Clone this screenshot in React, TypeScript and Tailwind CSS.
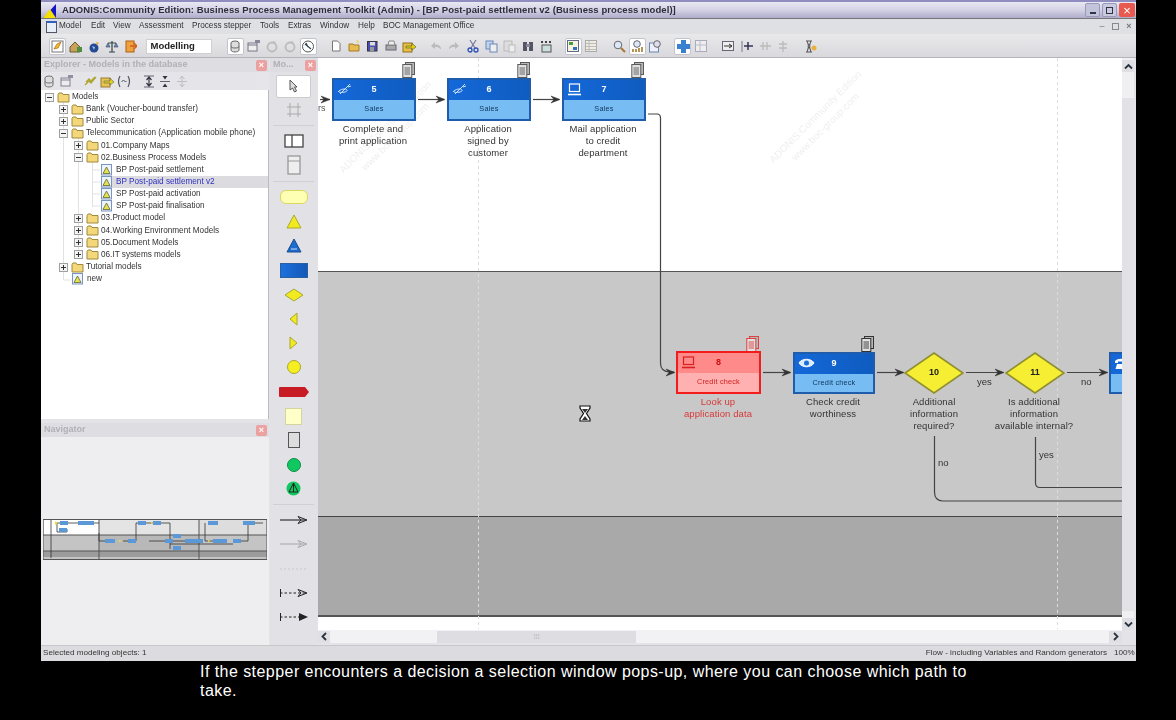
import React from "react";

const F = "font-['Liberation_Sans',Arial,sans-serif]";

function Ic({ n }: { n: string }) {
  const p: Record<string, React.ReactNode> = {
    note: <><rect x="2" y="2" width="11" height="11" fill="#fff" stroke="#777" /><path d="M4 10l3-5 4-2-3 6z" fill="#f0c020" stroke="#b06010" strokeWidth=".7" /></>,
    house: <><path d="M2 8l5-5 5 5v5H2z" fill="#caa05a" stroke="#6a5a30" /><rect x="9" y="8" width="5" height="5" fill="#4d8f3c" /></>,
    globe: <><circle cx="7" cy="9" r="4.5" fill="#234a90" /><path d="M5 7l3 1-1 3z" fill="#9cc0f0" /><path d="M9 3l3 1-2 2z" fill="#e0a030" /></>,
    scale: <><path d="M7 2v11M3 4h8M4 13h6" stroke="#344" strokeWidth="1.2" fill="none" /><path d="M1 8l2-4 2 4zM9 8l2-4 2 4z" fill="#6a8ac0" stroke="#345" strokeWidth=".6" /></>,
    door: <><rect x="3" y="2" width="8" height="11" fill="#f0a040" stroke="#b06010" /><path d="M7 7h7M11 4l3 3-3 3" stroke="#d06010" fill="none" strokeWidth="1.3" /></>,
    db: <><ellipse cx="7" cy="4" rx="4" ry="2" fill="#ddd" stroke="#666" /><path d="M3 4v7c0 2.6 8 2.6 8 0V4" fill="#ddd" stroke="#666" /><path d="M3 7.500c0 2 8 2 8 0" fill="none" stroke="#666" /></>,
    win: <><rect x="2" y="4" width="9" height="8" fill="#eee" stroke="#778" /><path d="M2 6h9" stroke="#778" /><path d="M9 1h5v3H9z" fill="#889" /></>,
    dim: <><circle cx="7" cy="8" r="4.500" fill="none" stroke="#bbb" strokeWidth="1.800" /><path d="M8 2l3 1-2 2z" fill="#bbb" /></>,
    comp: <><circle cx="7" cy="7.500" r="5.500" fill="#fff" stroke="#555" /><path d="M4 5l6 5M5 4l2 4" stroke="#345" strokeWidth="1.200" /></>,
    doc: <path d="M3.500 2h5l2.500 2.500V12h-7.500z" fill="#fff" stroke="#777" />,
    open: <><path d="M2 5h4l1 1h5v6H2z" fill="#e6bc50" stroke="#a87c20" /><path d="M9 1l3 1-1 3z" fill="#f0d060" /></>,
    save: <><rect x="2.500" y="2.500" width="9.500" height="9.500" fill="#4a4fb0" stroke="#334" /><rect x="5" y="3" width="5" height="3.500" fill="#ddd" /><rect x="5" y="8" width="4" height="4" fill="#999" /></>,
    print: <><rect x="2" y="6" width="10" height="5" fill="#aaa" stroke="#667" /><path d="M4 6l1-4h5l1 4z" fill="#eee" stroke="#888" /></>,
    exp: <><rect x="1" y="4" width="9" height="9" fill="#e8c040" stroke="#907020" /><path d="M4 7h6V4l4 4-4 3V9H4z" fill="#e0d000" stroke="#555" strokeWidth=".6" /></>,
    undo: <path d="M2 7l4-4v2.500c4 0 6 1.500 6 5-1.500-2-3-2.500-6-2.500V10z" fill="#bbb" />,
    redo: <path d="M12 7L8 3v2.500c-4 0-6 1.500-6 5 1.500-2 3-2.500 6-2.500V10z" fill="#bbb" />,
    cut: <><path d="M4 1l5 8M10 1L5 9" stroke="#779" strokeWidth="1.200" /><circle cx="4" cy="11" r="2" fill="none" stroke="#2a4fb8" strokeWidth="1.300" /><circle cx="10" cy="11" r="2" fill="none" stroke="#2a4fb8" strokeWidth="1.300" /></>,
    copy: <><rect x="2" y="2" width="7" height="8" fill="#c0d4f0" stroke="#6a88b8" /><rect x="6" y="5" width="7" height="8" fill="#eee" stroke="#6a88b8" /></>,
    paste: <><rect x="2" y="2" width="8" height="10" fill="#ddd" stroke="#bbb" /><rect x="7" y="6" width="6" height="7" fill="#eee" stroke="#bbb" /></>,
    find: <><rect x="2" y="3" width="4" height="9" fill="#556" /><rect x="8" y="3" width="4" height="9" fill="#556" /><rect x="5" y="5" width="4" height="3" fill="#889" /></>,
    repl: <><path d="M2 3h2M6 3h2M10 3h2" stroke="#444" strokeWidth="2" /><rect x="3" y="6" width="9" height="7" fill="#cdd" stroke="#555" /></>,
    model: <><rect x="1.500" y="1.500" width="11" height="11" fill="#f4f4e0" stroke="#668" /><path d="M3 3h4v3H3z" fill="#4a9a40" /><path d="M7 8h4v3H7z" fill="#3070c0" /></>,
    table: <><rect x="1.500" y="1.500" width="11" height="11" fill="#f0ece0" stroke="#aaa" /><path d="M1.500 4.500h11M1.500 7.500h11M1.500 10.500h11M5 1.500v11" stroke="#bbb" /></>,
    zoom: <><circle cx="6" cy="6" r="3.800" fill="#dde8f4" stroke="#667" /><path d="M9 9l4 4" stroke="#a87830" strokeWidth="2" /></>,
    zbar: <><circle cx="7" cy="5" r="3.300" fill="#dde8f4" stroke="#667" /><path d="M3 13v-3M6 13V10M9 13V9M12 13V8" stroke="#a07020" strokeWidth="1.500" /></>,
    zpg: <><rect x="1.500" y="4" width="9" height="9" fill="#eef" stroke="#68a" /><circle cx="9" cy="5" r="3.300" fill="#dde" stroke="#666" /></>,
    cross: <><rect x="1" y="5" width="13" height="5" fill="#3a80d0" /><rect x="5" y="1" width="5" height="13" fill="#3a80d0" /></>,
    grid: <><rect x="1.500" y="1.500" width="11" height="11" fill="#eee" stroke="#aab" /><path d="M1.500 6h11M6 1.500v11" stroke="#bbc" /></>,
    al1: <><rect x="1.500" y="2.500" width="11" height="9" fill="#eee" stroke="#667" /><path d="M3 7h8M8 5l3 2-3 2" stroke="#333" fill="none" /></>,
    al2: <><path d="M2 2v11" stroke="#778" /><path d="M4 7h9M8 3v8" stroke="#335" strokeWidth="1.500" /></>,
    al3: <><path d="M2 7h11M5 3v8M9 3v8" stroke="#bbb" strokeWidth="1.300" /></>,
    al4: <><path d="M7 2v11M3 5h8M3 9h8" stroke="#bbb" strokeWidth="1.300" /></>,
    hour: <><path d="M3 2h6M3 13h6M4 2l2 5-2 6M8 2L6 7l2 6" stroke="#555" fill="#bbb" /><circle cx="11" cy="9" r="2.500" fill="#e8b040" /></>,
    chart: <path d="M1 11l4-4 2 2 5-6M2 8l3-3 2 2 4-4" fill="none" stroke="#a8a020" strokeWidth="1.300" />,
    paren: <><path d="M3 2Q0 7.500 3 13M11 2Q14 7.500 11 13" fill="none" stroke="#445" strokeWidth="1.200" /><path d="M4.500 8l2-2 2 2 1-1" fill="none" stroke="#445" /></>,
    ex1: <><path d="M2 2h10M2 13h10" stroke="#556" /><path d="M7 3v9M4.500 6L7 3l2.500 3M4.500 9L7 12l2.500-3" fill="none" stroke="#223" strokeWidth="1.200" /></>,
    ex2: <><path d="M2 7.500h10" stroke="#556" /><path d="M4.500 2L7 5.500 9.500 2zM4.500 13L7 9.500 9.500 13z" fill="#223" /></>,
    ex3: <><path d="M2 7.500h10M7 2v11M4.500 5L7 2l2.500 3M4.500 10L7 13l2.500-3" fill="none" stroke="#bbb" /></>,
  };
  return <svg width="14" height="15" viewBox="0 0 14 15">{p[n]}</svg>;
}

const groups: { n: string; on?: boolean }[][] = [
  [{ n: "db", on: true }, { n: "win" }, { n: "dim" }, { n: "dim" }, { n: "comp", on: true }],
  [{ n: "doc" }, { n: "open" }, { n: "save" }, { n: "print" }, { n: "exp" }],
  [{ n: "undo" }, { n: "redo" }, { n: "cut" }, { n: "copy" }, { n: "paste" }, { n: "find" }, { n: "repl" }],
  [{ n: "model", on: true }, { n: "table" }],
  [{ n: "zoom" }, { n: "zbar", on: true }, { n: "zpg" }],
  [{ n: "cross", on: true }, { n: "grid" }],
  [{ n: "al1" }, { n: "al2" }, { n: "al3" }, { n: "al4" }],
  [{ n: "hour" }],
];

function Btn({ n, on, small }: { n: string; on?: boolean; small?: boolean }) {
  return (
    <div className={`${small ? "w-[16.7px]" : "w-[18.3px]"} h-[18px] flex items-center justify-center`}>
      <div className={on ? "w-[17px] h-[17px] shrink-0 flex items-center justify-center bg-white border border-[#c4c4cc] rounded-[2px]" : "w-[17px] h-[17px] shrink-0 flex items-center justify-center"}>
        <Ic n={n} />
      </div>
    </div>
  );
}

const menu: [string, string][] = [
  ["Model", "w-[32px]"], ["Edit", "w-[22px]"], ["View", "w-[26px]"], ["Assessment", "w-[53px]"], ["Process stepper", "w-[68px]"],
  ["Tools", "w-[28px]"], ["Extras", "w-[32px]"], ["Window", "w-[38px]"], ["Help", "w-[25px]"], ["BOC Management Office", "w-[100px]"],
];

type Row = { t: string; d: number; k: "open" | "closed" | "doc" | "none"; sel?: boolean };
const rows: Row[] = [
  { t: "Models", d: 0, k: "open" },
  { t: "Bank (Voucher-bound transfer)", d: 1, k: "closed" },
  { t: "Public Sector", d: 1, k: "closed" },
  { t: "Telecommunication (Application mobile phone)", d: 1, k: "open" },
  { t: "01.Company Maps", d: 2, k: "closed" },
  { t: "02.Business Process Models", d: 2, k: "open" },
  { t: "BP Post-paid settlement", d: 3, k: "doc" },
  { t: "BP Post-paid settlement v2", d: 3, k: "doc", sel: true },
  { t: "SP Post-paid activation", d: 3, k: "doc" },
  { t: "SP Post-paid finalisation", d: 3, k: "doc" },
  { t: "03.Product model", d: 2, k: "closed" },
  { t: "04.Working Environment Models", d: 2, k: "closed" },
  { t: "05.Document Models", d: 2, k: "closed" },
  { t: "06.IT systems models", d: 2, k: "closed" },
  { t: "Tutorial models", d: 1, k: "closed" },
  { t: "new", d: 1, k: "none" },
];
const indent: Record<number, string> = { 0: "pl-[4px]", 1: "pl-[18px]", 2: "pl-[33px]", 3: "pl-[60px]" };

function Folder() {
  return (
    <svg width="13" height="11" viewBox="0 0 13 11" className="shrink-0">
      <path d="M1 2.500l1-1.500h3l1 1.500h6v7.500H1z" fill="#f3d77a" stroke="#a08a3c" />
    </svg>
  );
}
function ModelDoc() {
  return (
    <svg width="12" height="12" viewBox="0 0 12 12" className="shrink-0">
      <rect x=".5" y=".5" width="10" height="10.500" fill="#eef4ff" stroke="#7a94c0" />
      <path d="M2 9.500L5.500 3 9 9.500z" fill="#e8e050" stroke="#5a6a30" strokeWidth=".8" />
    </svg>
  );
}
function TreeRow({ r }: { r: Row }) {
  const box = r.k === "open" || r.k === "closed";
  return (
    <div className={`relative h-[12.15px] flex items-center ${indent[r.d]}`}>
      {box && (
        <span className="w-[9px] h-[9px] mr-[3px] border border-[#a0a0a0] bg-[#f4f4f4] relative shrink-0 flex items-center justify-center">
          <span className="w-[5px] h-px bg-[#333]" />
          {r.k === "closed" && <span className="absolute left-[3px] top-[1px] w-px h-[5px] bg-[#333]" />}
        </span>
      )}
      {r.k === "none" && <span className="w-[13px] shrink-0 bg-white" />}
      <div className={`flex-1 h-full flex items-center ${r.sel ? "bg-[#dcdce0]" : ""}`}>
        {box ? <Folder /> : <ModelDoc />}
        <span className={`${box ? "ml-[2px]" : "ml-[3px]"} text-[8.200px] leading-none whitespace-nowrap ${r.sel ? "text-[#3030c0]" : "text-[#333]"}`}>{r.t}</span>
      </div>
    </div>
  );
}

function PanelTitle({ t, w }: { t: string; w: string }) {
  return (
    <div className={`h-[14px] shrink-0 flex items-center justify-between bg-[#dedee2] pl-[3px] pr-[2px] ${w}`}>
      <span className="text-[9px] font-bold text-[#b0b0b6] whitespace-nowrap">{t}</span>
      <span className="w-[11px] h-[11px] rounded-[2px] bg-[#eda0a0] flex items-center justify-center text-white text-[9px] leading-none font-bold">×</span>
    </div>
  );
}

function Pal({ children, sel }: { children: React.ReactNode; sel?: boolean }) {
  return (
    <div className="flex items-center justify-center h-[24.3px]">
      <div className={sel ? "w-[35px] h-[23px] bg-white border border-[#ccc] rounded-[2px] flex items-center justify-center" : "flex items-center justify-center"}>
        {children}
      </div>
    </div>
  );
}

function Arrow({ c = "#222", dash, head = "open", tail }: { c?: string; dash?: boolean; head?: "open" | "fill"; tail?: boolean }) {
  return (
    <svg width="30" height="12" viewBox="0 0 30 12">
      <path d="M1 6h25" stroke={c} strokeWidth="1.100" strokeDasharray={dash ? "2.500 2" : undefined} />
      {tail && <path d="M1.500 2v8" stroke={c} />}
      {head === "open" ? <path d="M19 2.500L28 6l-9 3.500 3-3.500z" fill="none" stroke={c} /> : <path d="M20 2l9 4-9 4z" fill={c} />}
    </svg>
  );
}

function Sep({ h }: { h: string }) {
  return (
    <div className={`${h} flex items-center mx-[3px]`}>
      <div className="h-px flex-1 bg-[#cfcfd4]" />
    </div>
  );
}

function Stack({ c = "#5a5a5a" }: { c?: string }) {
  return (
    <svg width="13" height="16" viewBox="0 0 13 16">
      <rect x="3.500" y=".5" width="9" height="12" fill="#b8b8b8" stroke={c} />
      <rect x=".8" y="2.500" width="9" height="13" fill="#e0e0e0" stroke={c} />
      <path d="M2.500 6h5.500M2.500 8h5.500M2.500 10h5.500M2.500 12h5.500" stroke={c} strokeWidth=".9" />
    </svg>
  );
}

function Mon({ c = "#fff" }: { c?: string }) {
  return (
    <svg width="15" height="13" viewBox="0 0 15 13">
      <rect x="2.500" y="1" width="10" height="7.500" fill="none" stroke={c} strokeWidth="1.200" />
      <path d="M1 11.500h13" stroke={c} strokeWidth="1.600" />
    </svg>
  );
}
function Sign() {
  return (
    <svg width="15" height="13" viewBox="0 0 15 13">
      <path d="M1 9c2-3 8-4 9-2s-5 3-8 2M3 11L13 1M11 4l3-1" fill="none" stroke="#cde4ff" strokeWidth="1" />
    </svg>
  );
}
function Eye() {
  return (
    <svg width="17" height="12" viewBox="0 0 17 12">
      <path d="M1 6c3-5 12-5 15 0-3 5-12 5-15 0z" fill="#d8ecff" stroke="#fff" />
      <circle cx="8.500" cy="6" r="2.500" fill="#1b6fd8" />
    </svg>
  );
}
function Phone() {
  return (
    <svg width="13" height="13" viewBox="0 0 13 13">
      <path d="M1 4c3-3 8-3 11 0v2H9V4.500H4V6H1zM3 7h7l1.500 5h-10z" fill="#fff" />
    </svg>
  );
}

function Box({ pos, num, lane, icon, red }: { pos: string; num?: string; lane?: string; icon: React.ReactNode; red?: boolean }) {
  return (
    <div className={`absolute ${pos} flex flex-col border-2 ${red ? "border-[#f21c1c] bg-[#ffb0b0]" : "border-[#1f5cab]"}`}>
      <div className={`relative h-[20px] flex items-center justify-center ${red ? "bg-[#ff8a8a]" : "bg-gradient-to-r from-[#1468d8] to-[#0f5cc0]"}`}>
        <span className="absolute left-[3px] top-[3px] flex">{icon}</span>
        {num && <span className={`text-[9px] font-bold ${red ? "text-[#d01010]" : "text-white"}`}>{num}</span>}
      </div>
      <div className={`flex-1 flex items-center justify-center text-[7.300px] tracking-[0.2px] ${red ? "bg-[#ffb0b0] text-[#d02020]" : "bg-[#78bcf4] text-[#123a60]"}`}>{lane}</div>
    </div>
  );
}

function Label({ pos, lines, c = "text-[#333]" }: { pos: string; lines: string[]; c?: string }) {
  return (
    <div className={`absolute ${pos} w-[110px] text-center text-[9.500px] leading-[11.800px] tracking-[0.1px] ${c}`}>
      {lines.map((l) => <div key={l} className="whitespace-nowrap">{l}</div>)}
    </div>
  );
}

function Watermark({ pos }: { pos: string }) {
  return (
    <div className={`absolute ${pos} -rotate-45 text-[#efefef] text-[10px] leading-[14px] text-center whitespace-nowrap`}>
      <div>ADONIS:Community Edition</div>
      <div>www.boc-group.com</div>
    </div>
  );
}

function Connectors() {
  const arrows = [
    "M2 41.500H12", "M100 41.500H126", "M215 41.500H241", "M330 56H339Q342.500 56 342.500 60V305Q342.500 314 352 314H356",
    "M445 314.500H472", "M559 314.500H585", "M648 314.500H685", "M749 314.500H789",
    "M616.500 378V434Q616.500 443 625 443H804", "M717.500 379V425Q717.500 429.500 722 429.500H804",
  ];
  const heads: [number, number][] = [[12, 41.500], [127, 41.500], [242, 41.500], [357, 314.500], [473, 314.500], [586, 314.500], [686, 314.500], [790, 314.500]];
  return (
    <svg className="absolute left-0 top-0" width="804" height="572" viewBox="0 0 804 572">
      <path d="M160.500 0V571M739.500 0V571" stroke="#dcdcdc" strokeDasharray="3 3" fill="none" />
      {arrows.map((d) => <path key={d} d={d} fill="none" stroke="#444" strokeWidth="1.200" />)}
      {heads.map(([x, y]) => <path key={x} d={`M${x - 9} ${y - 3.500}L${x} ${y}L${x - 9} ${y + 3.500}L${x - 6} ${y}z`} fill="#333" stroke="#333" strokeWidth=".5" />)}
    </svg>
  );
}

function Diamond({ pos, n }: { pos: string; n: string }) {
  return (
    <div className={`absolute ${pos} w-[60px] h-[42px] flex items-center justify-center`}>
      <svg className="absolute inset-0" width="60" height="42" viewBox="0 0 60 42">
        <path d="M30 1L59 21 30 41 1 21z" fill="#f5ee32" stroke="#8f8f30" strokeWidth="1.600" />
      </svg>
      <span className="relative text-[9px] font-bold text-[#222]">{n}</span>
    </div>
  );
}

function Thumb() {
  return (
    <svg width="224" height="41" viewBox="0 0 224 41" className="block">
      <rect width="224" height="41" fill="#c4c4c4" />
      <rect x="1" y="1" width="55" height="15" fill="#fff" />
      <rect x="56" y="1" width="100" height="15" fill="#e4e4e4" />
      <rect x="156" y="1" width="67" height="15" fill="#ddd" />
      <rect x="56" y="16" width="100" height="16" fill="#b8b8b8" />
      <rect y="32" width="224" height="6" fill="#9c9c9c" />
      <path d="M0 .5H224V40.500H0zM0 16H224M0 32H224M56 0V41M156 0V41" fill="none" stroke="#555" strokeWidth="1" />
      <path d="M8 1V39M14 4H56M14 4V13H24V10M56 14V22H70M80 22H93V4H110M110 4H127V30M106 22H145M127 25H190M162 4V22H175M192 22H205V4H220" fill="none" stroke="#333" strokeWidth=".8" />
      <path d="M17 2h8v4h-8zM35 2h16v4H35zM16 9h8v4h-8zM95 2h8v4h-8zM110 2h8v4h-8zM62 20h10v4H62zM85 20h8v4h-8zM122 20h8v4h-8zM130 15h8v4h-8zM142 20h18v4H142zM165 2h10v4H165zM200 2h12v4H200zM170 20h14v4H170zM190 20h8v4h-8zM130 27h8v4h-8z" fill="#5a98d8" />
      <path d="M12 2l3 2-3 2zM108 3l3 1-3 1zM76 21l3 1-3 1zM165 21l3 1-3 1z" fill="#e8e040" />
    </svg>
  );
}

function Chev({ d }: { d: string }) {
  return (
    <svg width="9" height="9" viewBox="0 0 9 9">
      <path d={d} fill="none" stroke="#2b3340" strokeWidth="1.800" />
    </svg>
  );
}

export default function App() {
  return (
    <div className={`w-[1176px] h-[720px] bg-black overflow-hidden ${F}`}>
      <div className="ml-[41px] w-[1095px] h-[661px] bg-[#e4e4e8] flex flex-col blur-[0.3px]">
        {/* title bar */}
        <div className="h-[19px] shrink-0 flex items-center bg-gradient-to-b from-[#e8e8f2] via-[#d4d2e4] to-[#aeaccb] border-t-2 border-t-[#8f8cc0] border-b border-b-[#777]">
          <svg width="15" height="15" viewBox="0 0 15 15" className="ml-[1px] shrink-0">
            <path d="M1 15L14 1v14z" fill="#1414c8" /><path d="M1 15L8 6l6 9z" fill="#f2e000" />
          </svg>
          <span className="ml-[5px] text-[9.500px] font-bold text-[#2d2d3c] tracking-[0.07px] whitespace-nowrap">ADONIS:Community Edition: Business Process Management Toolkit (Admin) - [BP Post-paid settlement v2 (Business process model)]</span>
          <div className="ml-auto flex gap-[2px] pr-[1px]">
            <div className="w-[15px] h-[14px] rounded-[2px] bg-[#c2c4dc] border border-[#9a9ab8] flex items-end justify-center pb-[2px]"><span className="w-[6px] h-[2px] bg-[#334]" /></div>
            <div className="w-[15px] h-[14px] rounded-[2px] bg-[#c8cae0] border border-[#9a9ab8] flex items-center justify-center"><span className="w-[7px] h-[7px] border border-[#334]" /></div>
            <div className="w-[16px] h-[14px] rounded-[2px] bg-[#e85a50] flex items-center justify-center text-white text-[13px] leading-none">×</div>
          </div>
        </div>
        {/* menu */}
        <div className="h-[15px] shrink-0 flex items-center bg-[#dfe0e4]">
          <div className="w-[11px] h-[12px] ml-[5px] mr-[2px] bg-[#e8eef8] border border-[#556] border-t-2 border-t-[#3060c0] shrink-0" />
          {menu.map(([m, w]) => <span key={m} className={`text-[8.200px] text-[#333] whitespace-nowrap ${w}`}>{m}</span>)}
          <div className="ml-auto flex items-center gap-[6px] pr-[3px] text-[#777] text-[9px] leading-none">
            <span className="w-[8px] text-center">–</span>
            <span className="w-[7px] h-[7px] border border-[#888]" />
            <span className="w-[8px] text-center font-bold">×</span>
          </div>
        </div>
        {/* toolbar */}
        <div className="h-[24px] shrink-0 flex items-center bg-gradient-to-b from-[#e9e9ec] to-[#d9d9dd] border-b border-[#b4b4b8] pl-[7px] pt-[2px]">
          <Btn n="note" on /><Btn n="house" /><Btn n="globe" /><Btn n="scale" /><Btn n="door" />
          <div className="ml-[7px] w-[66px] h-[15px] bg-white border border-[#d0d0d4] flex items-center pl-[3px] text-[9.500px] font-bold text-[#222] shrink-0">Modelling</div>
          <div className="w-[13.500px] shrink-0" />
          {groups.map((g, i) => (
            <div key={i} className="flex mr-[9px]">
              {g.map((b, j) => <Btn key={j} n={b.n} on={b.on} />)}
            </div>
          ))}
        </div>
        {/* body */}
        <div className="flex-1 min-h-0 flex">
          {/* left panel */}
          <div className="w-[228px] shrink-0 flex flex-col bg-[#e4e4e8]">
            <PanelTitle t="Explorer - Models in the database" w="w-[228px]" />
            <div className="h-[18px] shrink-0 flex items-center bg-[#e6e6ea] opacity-90">
              <Btn small n="db" /><Btn small n="win" /><div className="w-[8px]" />
              <Btn small n="chart" /><Btn small n="exp" /><Btn small n="paren" /><div className="w-[8px]" />
              <Btn small n="ex1" /><Btn small n="ex2" /><Btn small n="ex3" />
            </div>
            <div className="relative h-[329px] shrink-0 bg-white border-r border-[#bbb] pt-[1px]">
              <svg className="absolute left-0 top-0" width="227" height="329" viewBox="0 0 227 329">
                <path d="M8.500 7V13M22.500 7V190M22.500 31H27M37.500 44V165M37.500 56H42M51.500 68V117M51.500 80H59M51.500 92H59M51.500 104H59M51.500 116H59M22.500 190H30" fill="none" stroke="#e2e2e2" />
              </svg>
              {rows.map((r) => <TreeRow key={r.t} r={r} />)}
            </div>
            <div className="h-[4px] shrink-0" />
            <PanelTitle t="Navigator" w="w-[228px]" />
            <div className="flex-1 flex flex-col bg-[#eeeef0] pl-[2px] pt-[82px]">
              <Thumb />
            </div>
          </div>
          {/* palette */}
          <div className="w-[48px] shrink-0 ml-[1px] flex flex-col bg-[#e2e2e6]">
            <PanelTitle t="Mo..." w="w-[48px]" />
            <div className="pt-[2px] pr-[1px] flex flex-col">
              <Pal sel><svg width="12" height="15" viewBox="0 0 12 15"><path d="M2 1v10l2.500-2 2 4 2-1-2-4H9z" fill="#ddd" stroke="#555" /></svg></Pal>
              <Pal><svg width="16" height="16" viewBox="0 0 16 16"><path d="M1 12h14M4 1v14M12 1v14M1 5h14" stroke="#aaa" fill="none" /></svg></Pal>
              <Sep h="h-[6px]" />
              <Pal><svg width="20" height="14" viewBox="0 0 20 14"><rect x="1" y="1" width="18" height="12" fill="#fff" stroke="#444" strokeWidth="1.300" /><path d="M8 1v12" stroke="#444" strokeWidth="1.300" /></svg></Pal>
              <Pal><svg width="14" height="20" viewBox="0 0 14 20"><rect x="1" y="1" width="12" height="18" fill="#eee" stroke="#999" strokeWidth="1.300" /><path d="M1 6h12" stroke="#999" /></svg></Pal>
              <Sep h="h-[8px]" />
              <Pal><div className="w-[28px] h-[14px] rounded-[6px] bg-[#ffffb4] border border-[#d8d860]" /></Pal>
              <Pal><svg width="16" height="15" viewBox="0 0 16 15"><path d="M8 1l7 13H1z" fill="#f2ea20" stroke="#a8a830" /></svg></Pal>
              <Pal><svg width="16" height="15" viewBox="0 0 16 15"><path d="M8 1l7 13H1z" fill="#1c6cd0" stroke="#1c4a90" /><path d="M5 11h6" stroke="#cde" /></svg></Pal>
              <Pal><div className="w-[28px] h-[15px] bg-gradient-to-r from-[#1c70dc] to-[#1458b8] border border-[#2a60a0]" /></Pal>
              <Pal><svg width="20" height="14" viewBox="0 0 20 14"><path d="M10 1l9 6-9 6-9-6z" fill="#f2ea20" stroke="#a8a830" /></svg></Pal>
              <Pal><svg width="9" height="14" viewBox="0 0 9 14"><path d="M8 1v12L1 7z" fill="#f2ea20" stroke="#a8a830" /></svg></Pal>
              <Pal><svg width="9" height="14" viewBox="0 0 9 14"><path d="M1 1v12l7-6z" fill="#f2ea20" stroke="#a8a830" /></svg></Pal>
              <Pal><div className="w-[14px] h-[14px] rounded-full bg-[#f6ee20] border border-[#a8a830]" /></Pal>
              <Pal><svg width="32" height="12" viewBox="0 0 32 12"><path d="M2 1h25l4 5-4 5H2q-1 0-1-1V2q0-1 1-1z" fill="#c81c24" /></svg></Pal>
              <Pal><div className="w-[17px] h-[17px] bg-[#ffffc8] border border-[#d4d4a0]" /></Pal>
              <Pal><div className="w-[12px] h-[16px] bg-[#ddd] border border-[#555]" /></Pal>
              <Pal><div className="w-[14px] h-[14px] rounded-full bg-[#10c860] border border-[#0a9048]" /></Pal>
              <Pal><svg width="15" height="15" viewBox="0 0 15 15"><circle cx="7.500" cy="7.500" r="7" fill="#10c860" /><path d="M7.500 2L12 11H3z" fill="none" stroke="#222" /><path d="M7.500 2v9" stroke="#222" /></svg></Pal>
              <Sep h="h-[7px]" />
              <Pal><Arrow /></Pal>
              <Pal><Arrow c="#aaa" /></Pal>
              <Pal><svg width="30" height="4" viewBox="0 0 30 4"><path d="M1 2h28" stroke="#c8c8c8" strokeDasharray="2 2" /></svg></Pal>
              <Pal><Arrow dash tail /></Pal>
              <Pal><Arrow dash tail head="fill" /></Pal>
            </div>
          </div>
          {/* canvas and scrollbars */}
          <div className="w-[818px] shrink-0 flex flex-col">
            <div className="flex h-[572px]">
              <div className="relative w-[804px] h-[572px] overflow-hidden flex flex-col">
                <div className="h-[213px] bg-white shrink-0" />
                <div className="h-[245px] bg-[#c8c8c8] border-t border-[#555] shrink-0" />
                <div className="h-[101px] bg-[#a9a9a9] border-t border-[#444] border-b-2 border-b-[#555] shrink-0" />
                <div className="flex-1 bg-white" />

                <Watermark pos="left-[10px] top-[60px]" />
                <Watermark pos="left-[440px] top-[50px]" />
                <Connectors />
                <span className="absolute left-0 top-[44px] text-[9px] text-[#555]">rs</span>

                <div className="absolute left-[84px] top-[4px]"><Stack /></div>
                <div className="absolute left-[199px] top-[4px]"><Stack /></div>
                <div className="absolute left-[313px] top-[4px]"><Stack /></div>
                <div className="absolute left-[428px] top-[278px]"><Stack c="#e04040" /></div>
                <div className="absolute left-[543px] top-[278px]"><Stack c="#333" /></div>

                <Box pos="left-[14px] top-[20px] w-[84px] h-[43px]" num="5" lane="Sales" icon={<Sign />} />
                <Box pos="left-[129px] top-[20px] w-[84px] h-[43px]" num="6" lane="Sales" icon={<Sign />} />
                <Box pos="left-[244px] top-[20px] w-[84px] h-[43px]" num="7" lane="Sales" icon={<Mon />} />
                <Box pos="left-[358px] top-[293px] w-[85px] h-[43px]" num="8" lane="Credit check" icon={<Mon c="#d82020" />} red />
                <Box pos="left-[475px] top-[294px] w-[82px] h-[42px]" num="9" lane="Credit check" icon={<Eye />} />
                <Box pos="left-[791px] top-[294px] w-[84px] h-[42px]" icon={<Phone />} />

                <Diamond pos="left-[586px] top-[294px]" n="10" />
                <Diamond pos="left-[687px] top-[294px]" n="11" />

                <Label pos="left-[0px] top-[65px]" lines={["Complete and", "print application"]} />
                <Label pos="left-[115px] top-[65px]" lines={["Application", "signed by", "customer"]} />
                <Label pos="left-[230px] top-[65px]" lines={["Mail application", "to credit", "department"]} />
                <Label pos="left-[345px] top-[338px]" lines={["Look up", "application data"]} c="text-[#d83838]" />
                <Label pos="left-[460px] top-[338px]" lines={["Check credit", "worthiness"]} />
                <Label pos="left-[561px] top-[338px]" lines={["Additional", "information", "required?"]} />
                <Label pos="left-[661px] top-[338px]" lines={["Is additional", "information", "available internal?"]} />

                <span className="absolute left-[659px] top-[317px] text-[9.500px] text-[#333]">yes</span>
                <span className="absolute left-[763px] top-[317px] text-[9.500px] text-[#333]">no</span>
                <span className="absolute left-[620px] top-[398px] text-[9.500px] text-[#333]">no</span>
                <span className="absolute left-[721px] top-[390px] text-[9.500px] text-[#333]">yes</span>

                <svg className="absolute left-[261px] top-[347px]" width="12" height="17" viewBox="0 0 12 17">
                  <path d="M1 1h10v2L7.500 8.500 11 14v2H1v-2l3.500-5.500L1 3z" fill="#fff" stroke="#111" strokeWidth="1.200" />
                  <path d="M3 4h6L6 8zM3 15l3-4 3 4z" fill="#333" />
                </svg>
              </div>
              {/* vscroll */}
              <div className="w-[12px] h-[572px] flex flex-col bg-[#f0f0f2]">
                <div className="h-[12px] mt-[2px] shrink-0 bg-[#e0e0e4] flex items-center justify-center"><Chev d="M1 6.500l3.500-3.500 3.500 3.500" /></div>
                <div className="h-[26px] shrink-0" />
                <div className="flex-1 bg-[#e2e2e6]" />
                <div className="h-[7px] shrink-0" />
                <div className="h-[12px] shrink-0 bg-[#e0e0e4] flex items-center justify-center"><Chev d="M1 2.500l3.500 3.500 3.500-3.500" /></div>
              </div>
            </div>
            {/* hscroll */}
            <div className="h-[13px] flex items-center bg-[#f2f2f4] w-[804px]">
              <div className="w-[12px] h-[12px] bg-[#e0e0e4] flex items-center justify-center"><Chev d="M6 1L2.500 4.500 6 8" /></div>
              <div className="w-[107px]" />
              <div className="w-[199px] h-[12px] bg-[#dedee2] flex items-center justify-center text-[7px] text-[#aaa] leading-none">⦙⦙⦙</div>
              <div className="flex-1" />
              <div className="w-[13px] h-[12px] bg-[#e0e0e4] flex items-center justify-center"><Chev d="M3 1l3.500 3.500L3 8" /></div>
            </div>
            <div className="flex-1" />
          </div>
        </div>
        {/* status */}
        <div className="h-[16px] shrink-0 flex items-center bg-[#dcdce0] border-t border-[#c8c8cc] text-[8.100px] text-[#333]">
          <span className="ml-[2px] whitespace-nowrap">Selected modeling objects: 1</span>
          <span className="ml-auto whitespace-nowrap">Flow - including Variables and Random generators</span>
          <span className="ml-[7px] w-[22px] whitespace-nowrap">100%</span>
        </div>
      </div>
      <div className="ml-[200px] mt-[1px] w-[790px] text-white text-[16px] leading-[19px] tracking-[0.45px]">
        If the stepper encounters a decision a selection window pops-up, where you can choose which path to take.
      </div>
    </div>
  );
}
